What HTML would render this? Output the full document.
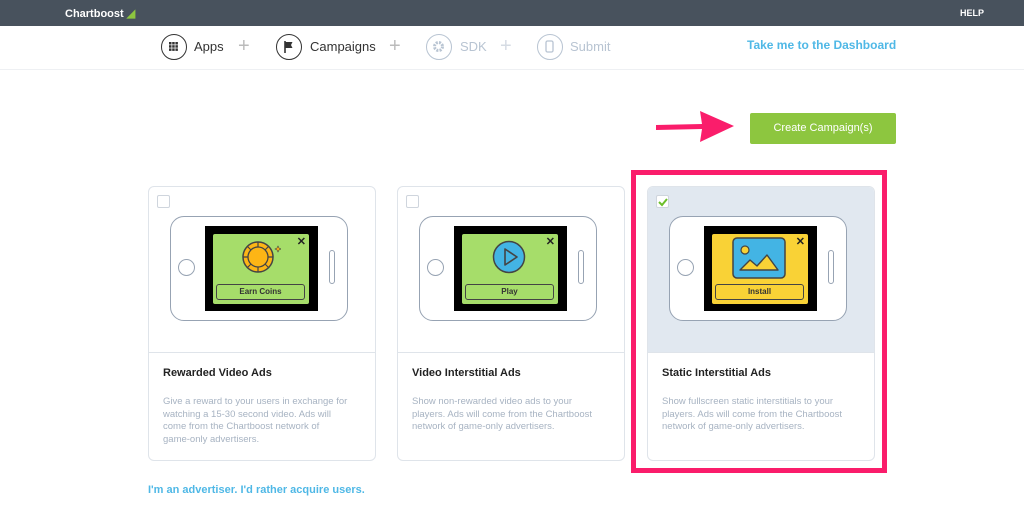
<!DOCTYPE html><html><head><style>
*{margin:0;padding:0;box-sizing:border-box}
body{width:1024px;height:515px;background:#fff;font-family:"Liberation Sans",sans-serif;position:relative;overflow:hidden}
.a{position:absolute}
.top{left:0;top:0;width:1024px;height:26px;background:#48525d;color:#fff;font-size:11px;font-weight:bold}
.nav{font-size:13px;color:#333}
.ic{width:26px;height:26px;border:1.5px solid #333;border-radius:50%}
.card{width:228px;height:275px;border:1px solid #dfe4ea;border-radius:6px;background:#fff;overflow:hidden}
.img{left:0;top:0;width:226px;height:166px;border-bottom:1px solid #dfe4ea}
.chk{left:8px;top:8px;width:13px;height:13px;border:1px solid #cfd5dd;border-radius:2px;background:#fff}
.ph{left:21px;top:29px;width:178px;height:105px;border:1.5px solid #97a3b3;border-radius:14px;background:#fff}
.hb{left:7px;top:42px;width:17px;height:17px;border:1.2px solid #97a3b3;border-radius:50%}
.sp{left:158px;top:33px;width:6px;height:34px;border:1.2px solid #97a3b3;border-radius:3px}
.scr{left:34px;top:9px;width:113px;height:85px;background:#000}
.in{left:8px;top:8px;width:96px;height:70px;border-radius:2px}
.btn{left:3px;top:50px;width:89px;height:16px;border:1.5px solid #444;border-radius:3px;font-size:8px;font-weight:bold;color:#333;text-align:center;line-height:13px}
.x{right:3px;top:1px;font-size:11px;font-weight:bold;color:#222}
.t{left:14px;top:180px;font-size:11px;font-weight:bold;color:#222}
.d{left:14px;top:209px;white-space:nowrap;font-size:9.5px;line-height:12.5px;color:#a7b3c2}
</style></head><body>
<div class="a top"><span class="a" style="left:65px;top:7px">Chartboost <span style="color:#8dc63f">◢</span></span><span class="a" style="left:960px;top:8px;font-size:9px">HELP</span></div>
<div class="a nav" style="left:0;top:27px;width:1024px;height:43px;border-bottom:1px solid #eef0f3">
<div class="a ic" style="left:161px;top:7px"><svg width="23" height="23" viewBox="0 0 23 23"><g fill="#333"><rect x="7" y="7" width="2.5" height="2.5"/><rect x="10.2" y="7" width="2.5" height="2.5"/><rect x="13.4" y="7" width="2.5" height="2.5"/><rect x="7" y="10.2" width="2.5" height="2.5"/><rect x="10.2" y="10.2" width="2.5" height="2.5"/><rect x="13.4" y="10.2" width="2.5" height="2.5"/><rect x="7" y="13.4" width="2.5" height="2.5"/><rect x="10.2" y="13.4" width="2.5" height="2.5"/><rect x="13.4" y="13.4" width="2.5" height="2.5"/></g></svg></div>
<span class="a" style="left:194px;top:12px">Apps</span><span class="a" style="left:238px;top:8px;font-size:20px;color:#bbb;font-weight:300">+</span>
<div class="a ic" style="left:276px;top:7px"><svg width="23" height="23" viewBox="0 0 23 23"><path d="M8 6v12" stroke="#333" stroke-width="1.6"/><path d="M8.5 7h7l-1.5 3 1.5 3h-7z" fill="#333"/></svg></div>
<span class="a" style="left:310px;top:12px">Campaigns</span><span class="a" style="left:389px;top:8px;font-size:20px;color:#bbb">+</span>
<div class="a ic" style="left:426px;top:7px;border-color:#b8c4d2"><svg width="23" height="23" viewBox="0 0 23 23"><circle cx="11.5" cy="11.5" r="4" fill="none" stroke="#b8c4d2" stroke-width="3" stroke-dasharray="2 1.2"/></svg></div>
<span class="a" style="left:460px;top:12px;color:#b8c4d2">SDK</span><span class="a" style="left:500px;top:8px;font-size:20px;color:#d5dbe3">+</span>
<div class="a ic" style="left:537px;top:7px;border-color:#b8c4d2"><svg width="23" height="23" viewBox="0 0 23 23"><rect x="8" y="6" width="7" height="11" rx="1.5" fill="none" stroke="#b8c4d2" stroke-width="1.3"/></svg></div>
<span class="a" style="left:570px;top:12px;color:#b8c4d2">Submit</span>
<span class="a" style="left:747px;top:11px;color:#4fb8e6;font-weight:bold;font-size:12px">Take me to the Dashboard</span>
</div>
<svg class="a" style="left:650px;top:108px" width="90" height="38"><path d="M6 17 L52 16 L50 3 L84 18 L50 34 L52 21 L6 22 Z" fill="#fa1d6b"/></svg>
<div class="a" style="left:750px;top:113px;width:146px;height:31px;background:#8dc63f;border-radius:2px;color:#fff;font-size:11px;text-align:center;line-height:31px">Create Campaign(s)</div>

<div class="a card" style="left:148px;top:186px"><div class="a img"><div class="a chk"></div><div class="a ph"><div class="a hb"></div><div class="a sp"></div><div class="a scr"><div class="a in" style="background:#a6dd6a"><svg class="a" style="left:28px;top:5px" width="40" height="40"><circle cx="17" cy="18" r="15" fill="#fdb515" stroke="#444" stroke-width="1.5"/><circle cx="17" cy="18" r="10" fill="#fdb515" stroke="#444" stroke-width="1.3"/><path d="M17 3v5M17 28v5M2 18h5M27 18h5M6 7l4 4M24 25l4 4M28 7l-4 4M10 25l-4 4" stroke="#444" stroke-width="1.2"/><path d="M36 9l1-2 1 2 2 1-2 1-1 2-1-2-2-1z" fill="#fdb515" stroke="#444" stroke-width=".6"/></svg><span class="a x">✕</span><div class="a btn">Earn Coins</div></div></div></div></div><div class="a t">Rewarded Video Ads</div><div class="a d">Give a reward to your users in exchange for<br>watching a 15-30 second video. Ads will<br>come from the Chartboost network of<br>game-only advertisers.</div></div>

<div class="a card" style="left:397px;top:186px"><div class="a img"><div class="a chk"></div><div class="a ph"><div class="a hb"></div><div class="a sp"></div><div class="a scr"><div class="a in" style="background:#a6dd6a"><svg class="a" style="left:30px;top:6px" width="36" height="36"><circle cx="17" cy="17" r="15.5" fill="#43b4e4" stroke="#444" stroke-width="1.5"/><path d="M13 9v16l12-8z" fill="#43b4e4" stroke="#444" stroke-width="1.6" stroke-linejoin="round"/></svg><span class="a x">✕</span><div class="a btn">Play</div></div></div></div></div><div class="a t">Video Interstitial Ads</div><div class="a d">Show non-rewarded video ads to your<br>players. Ads will come from the Chartboost<br>network of game-only advertisers.</div></div>

<div class="a" style="left:631px;top:170px;width:256px;height:303px;border:5px solid #fa1d6b"></div>
<div class="a card" style="left:647px;top:186px"><div class="a img" style="background:#e1e8f0"><div class="a chk"><svg class="a" style="left:0;top:0" width="12" height="12"><path d="M2 6l3 3 5-6" stroke="#6cbf2a" stroke-width="2" fill="none"/></svg></div><div class="a ph"><div class="a hb"></div><div class="a sp"></div><div class="a scr"><div class="a in" style="background:#f9d236"><svg class="a" style="left:20px;top:3px" width="56" height="44"><rect x="1" y="1" width="52" height="40" rx="4" fill="#43b4e4" stroke="#444" stroke-width="1.5"/><circle cx="13" cy="13" r="4" fill="#f9d236" stroke="#444" stroke-width="1.2"/><path d="M8 33l10-10 7 6 10-11 11 15z" fill="#f9d236" stroke="#444" stroke-width="1.4" stroke-linejoin="round"/></svg><span class="a x">✕</span><div class="a btn">Install</div></div></div></div></div><div class="a t">Static Interstitial Ads</div><div class="a d">Show fullscreen static interstitials to your<br>players. Ads will come from the Chartboost<br>network of game-only advertisers.</div></div>

<div class="a" style="left:148px;top:484px;color:#4fb8e6;font-size:11px;font-weight:bold">I'm an advertiser. I'd rather acquire users.</div>
</body></html>
